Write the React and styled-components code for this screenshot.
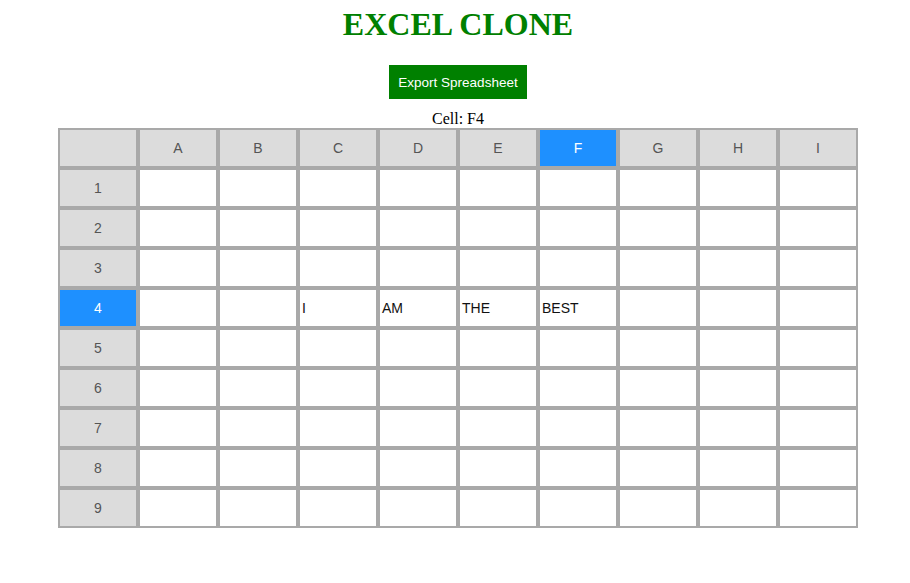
import React from 'react';
import styled, { createGlobalStyle } from 'styled-components';

const GlobalStyle = createGlobalStyle`
  body {
    margin: 0;
    background: #fff;
    font-family: "Liberation Serif", "Times New Roman", serif;
  }
`;

const Page = styled.div`
  width: 910px;
  padding-left: 6px;
  box-sizing: border-box;
  display: flex;
  flex-direction: column;
  align-items: center;
`;

const Title = styled.h1`
  margin: 6px 0 0;
  font-size: 32px;
  line-height: 37px;
  font-weight: bold;
  color: #008000;
  font-family: "Liberation Serif", "Times New Roman", serif;
`;

const ExportButton = styled.button`
  margin-top: 22px;
  width: 138px;
  height: 34px;
  padding: 0;
  border: none;
  background: #008000;
  color: #fff;
  font-family: "Liberation Sans", Arial, sans-serif;
  font-size: 13.5px;
  cursor: pointer;
`;

const CellLabel = styled.div`
  margin-top: 11px;
  font-size: 16px;
  line-height: 18px;
  color: #000;
`;

const Sheet = styled.div`
  width: 800px;
  height: 400px;
  box-sizing: border-box;
  padding: 2px;
  background: #a9a9a9;
  display: grid;
  grid-template-columns: repeat(10, 1fr);
  grid-template-rows: repeat(10, 1fr);
  gap: 4px;
`;

const HeaderCell = styled.div`
  display: flex;
  align-items: center;
  justify-content: center;
  background: ${p => (p.$active ? '#1e90ff' : '#dcdcdc')};
  color: ${p => (p.$active ? '#fff' : '#555')};
  font-family: "Liberation Sans", Arial, sans-serif;
  font-size: 14px;
`;

const DataCell = styled.div`
  display: flex;
  align-items: center;
  padding: 0 2px 1px;
  background: #fff;
  color: #111;
  font-family: "Liberation Sans", Arial, sans-serif;
  font-size: 14px;
`;

const cols = ['A', 'B', 'C', 'D', 'E', 'F', 'G', 'H', 'I'];
const values = { 'C4': 'I', 'D4': 'AM', 'E4': 'THE', 'F4': 'BEST' };
const selected = { col: 'F', row: 4 };

export default function App() {
  return (
    <Page>
      <GlobalStyle />
      <Title>EXCEL CLONE</Title>
      <ExportButton>Export Spreadsheet</ExportButton>
      <CellLabel>Cell: {selected.col}{selected.row}</CellLabel>
      <Sheet>
        <HeaderCell />
        {cols.map(c => (
          <HeaderCell key={c} $active={c === selected.col}>{c}</HeaderCell>
        ))}
        {[1, 2, 3, 4, 5, 6, 7, 8, 9].map(r => (
          <React.Fragment key={r}>
            <HeaderCell $active={r === selected.row}>{r}</HeaderCell>
            {cols.map(c => (
              <DataCell key={c + r}>{values[c + r] || ''}</DataCell>
            ))}
          </React.Fragment>
        ))}
      </Sheet>
    </Page>
  );
}
